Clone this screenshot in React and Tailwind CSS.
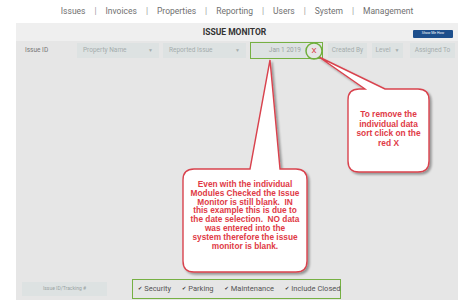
import React from "react";

const navItems = ["Issues", "Invoices", "Properties", "Reporting", "Users", "System", "Management"];
const modules = ["Security", "Parking", "Maintenance", "Include Closed"];

function Callouts() {
  return (
    <svg className="absolute left-0 top-0 pointer-events-none" width="474" height="302" viewBox="0 0 474 302">
      <defs>
        <filter id="shade" x="-20%" y="-20%" width="140%" height="140%">
          <feDropShadow dx="2" dy="2" stdDeviation="1.2" floodColor="#000" floodOpacity="0.35" />
        </filter>
      </defs>
      <path
        d="M 194 169 L 250 169 L 270 60 L 280 169 L 296 169 Q 307 169 307 180 L 307 261 Q 307 272 296 272 L 194 272 Q 183 272 183 261 L 183 180 Q 183 169 194 169 Z"
        fill="#fff"
        stroke="#d9434e"
        strokeWidth="1.4"
        filter="url(#shade)"
      />
      <path
        d="M 359 89 L 365 89 L 319 57 L 385 89 L 418 89 Q 429 89 429 100 L 429 161 Q 429 172 418 172 L 359 172 Q 348 172 348 161 L 348 100 Q 348 89 359 89 Z"
        fill="#fff"
        stroke="#d9434e"
        strokeWidth="1.4"
        filter="url(#shade)"
      />
      <circle cx="314" cy="51" r="8" fill="none" stroke="#6fae3c" strokeWidth="1.5" />
    </svg>
  );
}

export default function App() {
  return (
    <div className="relative w-[474px] h-[302px] bg-white overflow-hidden font-['Roboto',sans-serif]">
      {/* top nav */}
      <div className="h-[23px] flex items-center justify-center gap-[9px] text-[8.5px] text-[#707070]">
        {navItems.map((item, i) => (
          <React.Fragment key={item}>
            {i > 0 && <span className="text-[#999]">|</span>}
            <span>{item}</span>
          </React.Fragment>
        ))}
      </div>

      <div className="mx-[16px] h-[277px] bg-[#e6e6e6] flex flex-col">
        {/* title band */}
        <div className="h-[18px] bg-[#efefef] flex items-center">
          <div className="flex-1" />
          <div className="text-[8.5px] font-bold text-[#333]">ISSUE MONITOR</div>
          <div className="flex-1 flex justify-end pr-[5px] pt-[3px]">
            <div className="w-[40px] h-[8px] bg-[#1d4f8c] rounded-[1px] flex items-center justify-center text-[3.5px] text-white">
              Show Me How
            </div>
          </div>
        </div>

        {/* filter row */}
        <div className="flex items-center h-[19px] text-[6.5px]">
          <div className="w-[61px] pl-[9px] text-[#777]">Issue ID</div>
          <div className="w-[82px] h-[15px] bg-[#dde2e2] flex items-center justify-between px-[6px] text-[#a5adad]">
            <span>Property Name</span>
            <span className="text-[5px]">▼</span>
          </div>
          <div className="ml-[4px] w-[83px] h-[15px] bg-[#dde2e2] flex items-center justify-between px-[6px] text-[#a5adad]">
            <span>Reported Issue</span>
            <span className="text-[5px]">▼</span>
          </div>
          <div className="ml-[4px] w-[73px] h-[17px] border-[1.5px] border-[#76b043] flex items-center">
            <div className="w-[55px] h-full bg-[#dde2e2] flex items-center justify-end pr-[5px] text-[#9aa2a2]">
              Jan 1 2019
            </div>
            <div className="flex-1 text-center text-[8px] text-[#d9363e]">X</div>
          </div>
          <div className="ml-[5px] w-[39px] h-[15px] bg-[#dde2e2] flex items-center justify-center text-[#a5adad]">
            Created By
          </div>
          <div className="ml-[5px] w-[31px] h-[15px] bg-[#dde2e2] flex items-center justify-center gap-[4px] text-[#a5adad]">
            <span>Level</span>
            <span className="text-[5px]">▼</span>
          </div>
          <div className="ml-[7px] w-[45px] h-[15px] bg-[#dde2e2] flex items-center justify-center text-[#a5adad]">
            Assigned To
          </div>
        </div>

        <div className="flex-1" />

        {/* bottom row */}
        <div className="flex items-center h-[20px] mb-[1px]">
          <div className="ml-[6px] w-[85px] h-[14px] bg-[#dde2e2] flex items-center justify-center text-[5px] text-[#9aa2a2]">
            Issue ID/Tracking #
          </div>
          <div className="ml-[25px] w-[209px] h-[20px] border-[1.5px] border-[#76b043] flex items-center gap-[11px] pl-[5px] text-[7.5px] text-[#555] whitespace-nowrap">
            {modules.map((m) => (
              <div key={m} className="flex items-center gap-[2px]">
                <span className="text-[5px] font-['DejaVu_Sans',sans-serif] text-[#333]">✔</span>
                <span>{m}</span>
              </div>
            ))}
          </div>
        </div>
      </div>

      <Callouts />

      <div className="absolute left-[183px] top-[180px] w-[124px] text-center text-[8.3px] leading-[8.8px] font-bold text-[#e03a46] font-['Liberation_Sans',Arial,sans-serif] whitespace-pre">
        {"Even with the individual\nModules Checked the Issue\nMonitor is still blank.  IN\nthis example this is due to\nthe date selection.  NO data\nwas entered into the\nsystem therefore the issue\nmonitor is blank."}
      </div>
      <div className="absolute left-[348px] top-[110px] w-[81px] text-center text-[8.4px] leading-[9.7px] font-bold text-[#e03a46] font-['Liberation_Sans',Arial,sans-serif] whitespace-pre">
        {"To remove the\nindividual data\nsort click on the\nred X"}
      </div>
    </div>
  );
}
